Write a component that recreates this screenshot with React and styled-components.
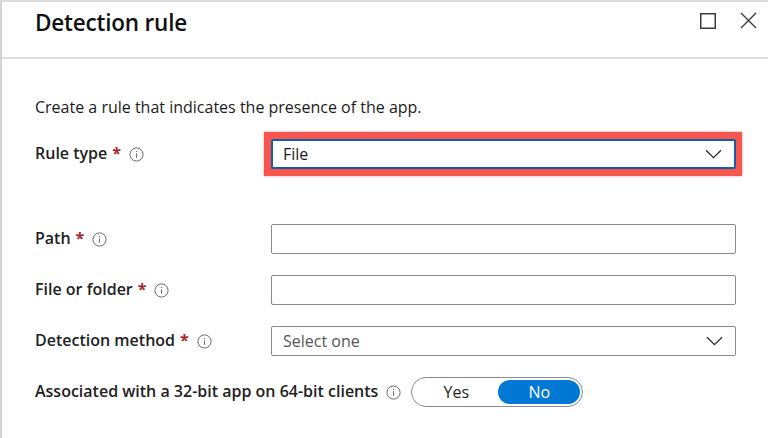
import React from 'react';
import styled, { createGlobalStyle } from 'styled-components';

const GlobalStyle = createGlobalStyle`
  body {
    margin: 0;
    background: #ffffff;
    font-family: "Open Sans", "Noto Sans", Arial, sans-serif;
    color: #1b1b1b;
  }
`;

const Panel = styled.div`
  width: 768px;
  height: 438px;
  box-sizing: border-box;
  border-left: 2px solid #d4d4d4;
  border-top: 2px solid #dcdcdc;
  overflow: hidden;
`;

const Header = styled.div`
  height: 57px;
  box-sizing: border-box;
  display: flex;
  align-items: flex-start;
  justify-content: space-between;
  padding: 6px 10px 0 33px;
  border-bottom: 2px solid #e1e1e1;
`;

const Title = styled.h1`
  margin: 0;
  font-size: 22.5px;
  line-height: 30px;
  font-weight: 600;
  color: #111;
  letter-spacing: -0.2px;
`;

const HeaderActions = styled.div`
  display: flex;
  align-items: center;
  gap: 24px;
  padding: 4px 1px 0 0;
`;

const IconButton = styled.button`
  border: 0;
  background: none;
  padding: 0;
  width: 17px;
  height: 17px;
  display: flex;
  align-items: center;
  justify-content: center;
  color: #3b3b3b;
  cursor: pointer;
`;

const Body = styled.div`
  padding: 37px 0 0 33px;
`;

const Intro = styled.p`
  margin: 0 0 14px;
  font-size: 16px;
  line-height: 22px;
  color: #1b1b1b;
`;

const Row = styled.div`
  display: flex;
  align-items: center;
  height: ${p => p.$height || 30}px;
  margin-bottom: ${p => p.$gap || 21}px;
`;

const Label = styled.div`
  width: ${p => (p.$inline ? 'auto' : '236px')};
  flex-shrink: 0;
  display: flex;
  align-items: center;
  font-size: 16px;
  font-weight: 600;
  color: #222;
  margin-top: -3px;
`;

const Required = styled.span`
  color: #a4262c;
  margin-left: 5px;
  font-weight: 700;
`;

const InfoWrap = styled.span`
  display: inline-flex;
  margin-left: 8px;
  margin-top: 3px;
`;

const Highlight = styled.div`
  margin-left: -7px;
  padding: 7px 6px 7px 7px;
  background: #f6564d;
  box-shadow: 0 0 2px rgba(180, 40, 30, 0.5);
`;

const Field = styled.div`
  width: ${p => p.$width || 465}px;
  height: 30px;
  box-sizing: border-box;
  border: ${p => (p.$focused ? '2px solid #0f5fb0' : '1px solid #8a8a8a')};
  border-radius: 2px;
  background: #fff;
  display: flex;
  align-items: center;
  justify-content: space-between;
  padding: 0 12px 0 ${p => (p.$focused ? '10px' : '11px')};
  font-size: 16px;
  color: ${p => (p.$placeholder ? '#555' : '#1b1b1b')};
`;

const ToggleRow = styled.div`
  display: flex;
  align-items: center;
  height: 30px;
`;

const Toggle = styled.div`
  margin-left: 10px;
  width: 172px;
  height: 30px;
  box-sizing: border-box;
  border: 1px solid #8a8a8a;
  border-radius: 15px;
  display: flex;
  align-items: center;
  padding: 2px;
`;

const ToggleOption = styled.div`
  height: 24px;
  display: flex;
  align-items: center;
  justify-content: center;
  border-radius: 12px;
  font-size: 16px;
  flex: ${p => (p.$active ? '0 0 82px' : '1')};
  background: ${p => (p.$active ? '#0078d4' : 'transparent')};
  color: ${p => (p.$active ? '#fff' : '#222')};
`;

const InfoIcon = () => (
  <svg width="15" height="15" viewBox="0 0 15 15" fill="none">
    <circle cx="7.5" cy="7.5" r="6.6" stroke="#6b6b6b" strokeWidth="1" />
    <line x1="7.5" y1="6.3" x2="7.5" y2="10.8" stroke="#6b6b6b" strokeWidth="1" />
    <circle cx="7.5" cy="4.4" r="0.7" fill="#6b6b6b" />
  </svg>
);

const Chevron = () => (
  <svg width="17" height="10" viewBox="0 0 17 10" fill="none">
    <path d="M1 1.2 L8.5 8.6 L16 1.2" stroke="#2b2b2b" strokeWidth="1.3" />
  </svg>
);

const Info = () => (
  <InfoWrap>
    <InfoIcon />
  </InfoWrap>
);

const FieldLabel = ({ children, required = true, inline }) => (
  <Label $inline={inline}>
    {children}
    {required && <Required>*</Required>}
    <Info />
  </Label>
);

const App = () => {
  return (
    <>
      <GlobalStyle />
      <Panel>
        <Header>
          <Title>Detection rule</Title>
          <HeaderActions>
            <IconButton aria-label="Maximize">
              <svg width="16" height="16" viewBox="0 0 16 16" fill="none">
                <rect x="0.75" y="0.75" width="14.5" height="14.5" stroke="#3b3b3b" strokeWidth="1.5" />
              </svg>
            </IconButton>
            <IconButton aria-label="Close">
              <svg width="17" height="17" viewBox="0 0 17 17" fill="none">
                <path d="M1 1 L16 16 M16 1 L1 16" stroke="#3b3b3b" strokeWidth="1.4" />
              </svg>
            </IconButton>
          </HeaderActions>
        </Header>
        <Body>
          <Intro>Create a rule that indicates the presence of the app.</Intro>
          <Row $height={44} $gap={48}>
            <FieldLabel>Rule type</FieldLabel>
            <Highlight>
              <Field $focused>
                File
                <Chevron />
              </Field>
            </Highlight>
          </Row>
          <Row>
            <FieldLabel>Path</FieldLabel>
            <Field />
          </Row>
          <Row>
            <FieldLabel>File or folder</FieldLabel>
            <Field />
          </Row>
          <Row>
            <FieldLabel>Detection method</FieldLabel>
            <Field $placeholder>
              Select one
              <Chevron />
            </Field>
          </Row>
          <ToggleRow>
            <FieldLabel required={false} inline>
              Associated with a 32-bit app on 64-bit clients
            </FieldLabel>
            <Toggle>
              <ToggleOption>Yes</ToggleOption>
              <ToggleOption $active>No</ToggleOption>
            </Toggle>
          </ToggleRow>
        </Body>
      </Panel>
    </>
  );
};

export default App;
